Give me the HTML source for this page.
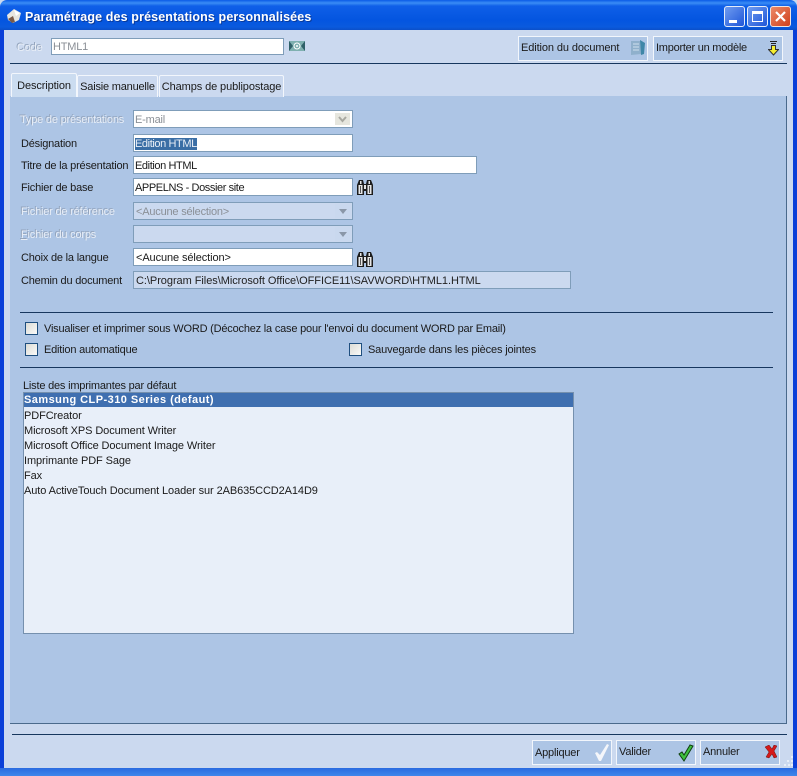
<!DOCTYPE html>
<html lang="fr"><head><meta charset="utf-8"><title>Paramétrage</title>
<style>
html,body{margin:0;padding:0;width:797px;height:776px;overflow:hidden;background:#cbd9ef}
body{position:relative;font-family:"Liberation Sans",sans-serif;font-size:11px;letter-spacing:-.2px;color:#1a1a1a}
.a{position:absolute;white-space:nowrap}
.l{position:absolute;white-space:nowrap;height:14px;line-height:14px}
.d{color:#e8eef7;text-shadow:-1px -1px 0 #93a4bc}
.f{position:absolute;box-sizing:border-box;background:#fff;border:1px solid #7f9db9;height:18px;line-height:18px;padding-left:1px;white-space:nowrap;overflow:hidden}
.g{color:#8a8f96}
.r{position:absolute;box-sizing:border-box;background:#adc5e5;border:1px solid #f2f6fc;height:25px;line-height:23px;padding-left:2px;white-space:nowrap}
.hr{position:absolute;height:1px;background:#17375e}
.arrow{position:absolute;right:1px;top:1px;width:16px;height:14px;background:#c9d8ee}
.arrow:after{content:"";position:absolute;left:4px;top:5px;border:4px solid transparent;border-top:5px solid #8a97a8;border-bottom:0}
.cb{position:absolute;box-sizing:border-box;width:13px;height:13px;border:1px solid #1f4f7f;background:linear-gradient(135deg,#dcdcd6,#fafaf8)}
.t{position:absolute;box-sizing:border-box;top:73px;height:24px;background:#cbd9ef;border:1px solid #f2f6fc;border-bottom:0;line-height:24px;text-align:center;border-radius:2px 2px 0 0;white-space:nowrap;letter-spacing:-.12px}
.p{position:absolute;left:24px;white-space:nowrap;height:15px;line-height:17px;letter-spacing:-.1px}
.q{margin-top:1px}
</style></head><body>

<div class="a" style="left:0;top:0;width:797px;height:30px;background:linear-gradient(#0a5be6 0,#3a8cf5 3px,#0f5fe8 6px,#0455e0 20px,#0a5ade 27px,#0b4fc8 30px);border-radius:7px 7px 0 0"></div>
<div class="a" style="left:0;top:30px;width:4px;height:738px;background:#0a3fd8"></div>
<div class="a" style="left:793px;top:30px;width:4px;height:738px;background:#0a3fd8"></div>
<div class="a" style="left:0;top:768px;width:797px;height:8px;background:linear-gradient(#2a6be0,#3f86ea)"></div>

<svg class="a" style="left:5px;top:7px" width="18" height="18" viewBox="0 0 18 18"><path d="M2 8l7-6 7 4-2 7-6 3-5-3z" fill="#e8e6e0"/><path d="M3 12l5-3 2 6-3 1z" fill="#7a5a48"/><path d="M9 3l6 3-4 3z" fill="#fff"/></svg>
<div class="a" style="left:25px;top:9px;font-weight:bold;font-size:12.5px;line-height:16px;color:#fff;text-shadow:1px 1px 0 #0a3a9a;letter-spacing:.13px">Paramétrage des présentations personnalisées</div>

<div class="a" style="left:724px;top:6px;width:21px;height:21px;box-sizing:border-box;border:1px solid #e4ecfa;border-radius:3px;background:linear-gradient(135deg,#6f9cf0,#1f56d8)"><div class="a" style="left:4px;top:13px;width:8px;height:3px;background:#fff"></div></div>
<div class="a" style="left:747px;top:6px;width:21px;height:21px;box-sizing:border-box;border:1px solid #e4ecfa;border-radius:3px;background:linear-gradient(135deg,#6f9cf0,#1f56d8)"><div class="a" style="left:4px;top:4px;width:11px;height:11px;box-sizing:border-box;border:1px solid #fff;border-top:3px solid #fff"></div></div>
<div class="a" style="left:770px;top:6px;width:21px;height:21px;box-sizing:border-box;border:1px solid #f0e4e0;border-radius:3px;background:linear-gradient(135deg,#ec8a68,#d0401c)"><svg class="a" style="left:3px;top:3px" width="13" height="13" viewBox="0 0 13 13"><path d="M2 2l9 9M11 2l-9 9" stroke="#fff" stroke-width="2.2"/></svg></div>

<div class="l d" style="left:17px;top:41px">Code</div>
<div class="f g" style="left:51px;top:38px;width:233px;height:17px;line-height:16px">HTML1</div>
<svg class="a" style="left:289px;top:41px" width="16" height="10" viewBox="0 0 16 10"><rect width="16" height="10" fill="#7fb0b0"/><path d="M0 0l4 5-4 5M16 0l-4 5 4 5" fill="#2f6068"/><circle cx="8" cy="5" r="3" fill="none" stroke="#fff"/><circle cx="8" cy="5" r="1" fill="#fff"/></svg>

<div class="r" style="left:518px;top:36px;width:130px;letter-spacing:-.1px">Edition du document</div>
<svg class="a" style="left:630px;top:39px" width="16" height="18" viewBox="0 0 16 18"><path d="M1 2h9l1 13-10 1z" fill="#8fb0cc"/><path d="M10 1l5 3-1 11-3 1z" fill="#3f87a8"/><path d="M3 5h6M3 8h6M3 11h6" stroke="#cfe0ee"/></svg>
<div class="r" style="left:653px;top:36px;width:130px;letter-spacing:-.25px">Importer un modèle</div>
<svg class="a" style="left:768px;top:41px" width="11" height="15" viewBox="0 0 11 15"><path d="M2 .5h7M3 2.500h5" stroke="#222"/><path d="M3.500 4.500h4v4h3l-5 5.500-5-5.500h3z" fill="#f5ee30" stroke="#333"/></svg>

<div class="hr" style="left:10px;top:63px;width:777px"></div>

<div class="a" style="left:10px;top:96px;width:777px;height:628px;box-sizing:border-box;background:#adc5e5;border-right:1px solid #4a6a8c;border-bottom:1px solid #4a6a8c"></div>
<div class="t" style="left:11px;top:73px;width:66px;height:24px;background:#cbdcf0;line-height:25px">Description</div>
<div class="t" style="left:77px;top:75px;width:81px;height:22px;line-height:23px;letter-spacing:-.2px">Saisie manuelle</div>
<div class="t" style="left:159px;top:75px;width:125px;height:22px;line-height:23px;letter-spacing:-.1px">Champs de publipostage</div>

<div class="l d" style="left:20px;top:113px">Type de présentations</div>
<div class="f g" style="left:133px;top:110px;width:220px">E-mail<div class="a" style="right:2px;top:2px;width:15px;height:12px;background:#e6e6de"><svg class="a" style="left:3px;top:3px" width="9" height="7"><path d="M1 1l3.500 4L8 1" fill="none" stroke="#a8a8a0" stroke-width="2"/></svg></div></div>

<div class="l" style="left:21px;top:137px">Désignation</div>
<div class="f" style="left:133px;top:134px;width:220px;letter-spacing:-.4px"><span style="background:#3a6ea5;color:#e8eef6">Edition HTML</span></div>

<div class="l" style="left:21px;top:159px">Titre de la présentation</div>
<div class="f" style="left:133px;top:156px;width:344px;padding-left:1px;letter-spacing:-.4px">Edition HTML</div>

<div class="l" style="left:21px;top:181px">Fichier de base</div>
<div class="f" style="left:133px;top:178px;width:220px;letter-spacing:-.4px">APPELNS - Dossier site</div>
<svg class="a" style="left:357px;top:179px" width="16" height="17" viewBox="0 0 16 17"><path d="M0 16V6l2-5h4l1 4h2l1-4h4l2 5v10H9v-4H7v4z" fill="#1c1c1c"/><path d="M1.500 6h4v9h-4zM10.500 6h4v9h-4zM3 2h1.500v3H3zM11.500 2H13v3h-1.500zM7 6h2v4H7z" fill="#e6e6e6"/><path d="M3.500 7v7M12.500 7v7" stroke="#555"/></svg>

<div class="l d" style="left:21px;top:205px">Fichier de référence</div>
<div class="f g" style="left:133px;top:202px;width:220px;background:#cbd9ef;padding-left:2px">&lt;Aucune sélection&gt;<div class="arrow"></div></div>

<div class="l d" style="left:21px;top:228px"><u>F</u>ichier du corps</div>
<div class="f" style="left:133px;top:225px;width:220px;background:#cbd9ef"><div class="arrow"></div></div>

<div class="l" style="left:21px;top:251px">Choix de la langue</div>
<div class="f" style="left:133px;top:248px;width:220px;padding-left:2px;letter-spacing:-.1px">&lt;Aucune sélection&gt;</div>
<svg class="a" style="left:357px;top:251px" width="16" height="17" viewBox="0 0 16 17"><path d="M0 16V6l2-5h4l1 4h2l1-4h4l2 5v10H9v-4H7v4z" fill="#1c1c1c"/><path d="M1.500 6h4v9h-4zM10.500 6h4v9h-4zM3 2h1.500v3H3zM11.500 2H13v3h-1.500zM7 6h2v4H7z" fill="#e6e6e6"/><path d="M3.500 7v7M12.500 7v7" stroke="#555"/></svg>

<div class="l" style="left:21px;top:274px">Chemin du document</div>
<div class="f" style="left:133px;top:271px;width:438px;background:#cbd9ef;padding-left:2px;color:#222;letter-spacing:-.05px">C:\Program Files\Microsoft Office\OFFICE11\SAVWORD\HTML1.HTML</div>

<div class="hr" style="left:20px;top:312px;width:753px"></div>
<div class="cb" style="left:25px;top:322px"></div>
<div class="l" style="left:44px;top:322px">Visualiser et imprimer sous WORD (Décochez la case pour l'envoi du document WORD par Email)</div>
<div class="cb" style="left:25px;top:343px"></div>
<div class="l" style="left:44px;top:343px">Edition automatique</div>
<div class="cb" style="left:349px;top:343px"></div>
<div class="l" style="left:368px;top:343px;letter-spacing:-.15px">Sauvegarde dans les pièces jointes</div>
<div class="hr" style="left:20px;top:367px;width:753px"></div>

<div class="l" style="left:23px;top:379px">Liste des imprimantes par défaut</div>
<div class="a" style="left:23px;top:392px;width:551px;height:242px;box-sizing:border-box;background:#e8eff9;border:1px solid #7590ae"></div>
<div class="a" style="left:24px;top:393px;width:549px;height:14px;background:#3f6fb0"></div>
<div class="p" style="top:392px;color:#fff;font-weight:bold;letter-spacing:.45px">Samsung CLP-310 Series (defaut)</div>
<div class="p q" style="top:407px">PDFCreator</div>
<div class="p q" style="top:422px">Microsoft XPS Document Writer</div>
<div class="p q" style="top:437px">Microsoft Office Document Image Writer</div>
<div class="p q" style="top:452px">Imprimante PDF Sage</div>
<div class="p q" style="top:467px">Fax</div>
<div class="p q" style="top:482px">Auto ActiveTouch Document Loader sur 2AB635CCD2A14D9</div>

<div class="hr" style="left:12px;top:734px;width:775px"></div>
<div class="r" style="left:532px;top:740px;width:80px;line-height:24px">Appliquer</div>
<svg class="a" style="left:594px;top:743px" width="16" height="19" viewBox="0 0 16 19"><path d="M1 10l2-1 3 3 7-11 2 1-8 16h-2z" fill="#f4f6fa"/></svg>
<div class="r" style="left:616px;top:740px;width:80px;line-height:23px">Valider</div>
<svg class="a" style="left:678px;top:744px" width="16" height="18" viewBox="0 0 16 18"><path d="M1 10l5 7 9-15-3-1-6 10-2-3z" fill="#3fc03f" stroke="#0f3f0f"/></svg>
<div class="r" style="left:700px;top:740px;width:80px;line-height:23px">Annuler</div>
<svg class="a" style="left:764px;top:745px" width="13" height="14" viewBox="0 0 13 14"><path d="M1 2l4 5-3 5 3 1 3-4 2 4 3-1-3-6 3-5-3-1-2 4-3-4z" fill="#d41a1a" stroke="#6a1010" stroke-width=".5"/></svg>
<svg class="a" style="left:783px;top:755px" width="11" height="11" viewBox="0 0 11 11"><path d="M8 1h2v2H8zM4 5h2v2H4zM8 5h2v2H8zM1 9h2v2H1zM5 9h2v2H5zM8 9h2v2H8z" fill="#e8eff9"/></svg>

</body></html>
